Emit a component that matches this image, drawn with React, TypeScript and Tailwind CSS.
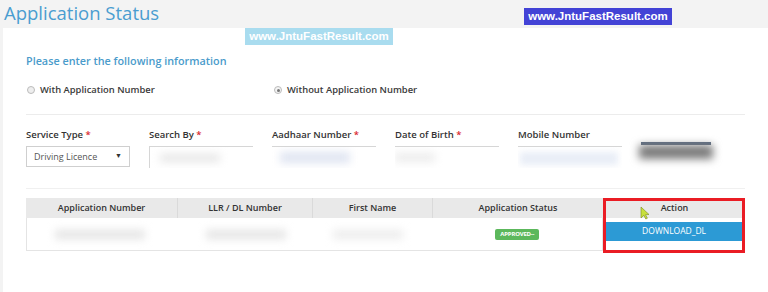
import React from 'react'

const fields = [
  { label: 'Service Type', req: true, kind: 'select' },
  { label: 'Search By', req: true, kind: 'box' },
  { label: 'Aadhaar Number', req: true, kind: 'blueTop' },
  { label: 'Date of Birth', req: true, kind: 'line' },
  { label: 'Mobile Number', req: false, kind: 'blueLine' },
]

const columns = [
  { title: 'Application Number', w: 'w-[151px]' },
  { title: 'LLR / DL Number', w: 'w-[135px]' },
  { title: 'First Name', w: 'w-[120px]' },
  { title: 'Application Status', w: 'w-[171px]' },
  { title: 'Action', w: 'w-[142px]' },
]

function Watermark({ light }: { light?: boolean }) {
  return (
    <div
      className={`w-[148px] h-[17px] flex items-center justify-center text-[11.5px] font-bold text-white ${
        light ? 'bg-[#a9dcef]' : 'bg-[#4343d6]'
      }`}
      style={{ fontFamily: '"Liberation Sans", Arial, sans-serif' }}
    >
      www.JntuFastResult.com
    </div>
  )
}

function Field({ label, req, kind }: { label: string; req: boolean; kind: string }) {
  return (
    <div className="w-[104px] flex flex-col">
      <div className="h-[16px] text-[9.5px] font-semibold text-[#333] leading-[16px] whitespace-nowrap">
        {label} {req && <span className="text-[#d9262c]">*</span>}
      </div>
      <div className="h-[3px]" />
      {kind === 'select' && (
        <div className="h-[21px] border border-[#cfcfcf] flex items-center justify-between px-[7px] text-[9px] text-[#555]">
          <span>Driving Licence</span>
          <span className="text-[7px] text-[#333]">▼</span>
        </div>
      )}
      {kind === 'box' && (
        <div className="h-[22px] border-l border-t border-[#d6d6d6] relative overflow-hidden">
          <div className="absolute left-[10px] top-[7px] w-[60px] h-[8px] bg-[#e6e6e6] blur-[4px]" />
        </div>
      )}
      {kind === 'blueTop' && (
        <div className="h-[22px] border-t border-[#d6d6d6] relative overflow-hidden">
          <div className="absolute left-[8px] top-[5px] w-[70px] h-[11px] bg-[#dfe4f1] blur-[4px]" />
        </div>
      )}
      {kind === 'line' && (
        <div className="h-[22px] border-t border-[#d6d6d6] relative overflow-hidden">
          <div className="absolute left-[0px] top-[6px] w-[40px] h-[9px] bg-[#ececec] blur-[4px]" />
        </div>
      )}
      {kind === 'blueLine' && (
        <div className="h-[22px] border-t border-[#d6d6d6] relative overflow-hidden">
          <div className="absolute left-[2px] top-[5px] w-[98px] h-[13px] bg-[#e9eef7] blur-[3px]" />
        </div>
      )}
    </div>
  )
}

export default function App() {
  return (
    <div
      className="w-[768px] h-[292px] bg-[#f3f3f3] overflow-hidden relative"
      style={{ fontFamily: '"Open Sans", "Noto Sans", sans-serif' }}
    >
      <div className="h-[28px] flex items-center pl-[4px] relative">
        <h1 className="text-[18.5px] leading-none text-[#4a9dd0] -mt-[2px]">Application Status</h1>
        <div className="absolute left-[524px] top-[8px]">
          <Watermark />
        </div>
      </div>

      <div className="ml-[3px] h-[264px] bg-white relative">
        <div className="absolute left-[242px] top-0">
          <Watermark light />
        </div>

        <div className="pl-[23px] pr-[23px] flex flex-col">
          <div className="mt-[26px] h-[14px] text-[10.8px] font-semibold text-[#4a9bcb] leading-[14px]">
            Please enter the following information
          </div>

          <div className="mt-[15px] h-[14px] flex items-center text-[9.4px] font-semibold text-[#3a3a3a]">
            <div className="w-[248px] flex items-center">
              <span className="ml-[1px] w-[8px] h-[8px] rounded-full border border-[#bbb] bg-[#eee]" />
              <span className="ml-[5px]">With Application Number</span>
            </div>
            <div className="flex items-center">
              <span className="w-[8px] h-[8px] rounded-full border border-[#bbb] bg-[#f4f4f4] flex items-center justify-center">
                <span className="w-[3px] h-[3px] rounded-full bg-[#777]" />
              </span>
              <span className="ml-[5px]">Without Application Number</span>
            </div>
          </div>

          <div className="mt-[17px] border-t border-[#ececec]" />

          <div className="mt-[12px] flex gap-[19px]">
            {fields.map(f => (
              <Field key={f.label} {...f} />
            ))}
            <div className="w-[70px] pt-[15px] relative">
              <div className="h-[3px] bg-[#5b6b82]" />
              <div className="absolute left-[-2px] top-[18px] w-[74px] h-[14px] bg-[#7a7a7a] blur-[4px]" />
            </div>
          </div>

          <div className="mt-[20px] border-t border-[#f0f0f0]" />

          <div className="mt-[9px] relative w-[719px]">
            <div className="flex h-[20px] bg-[#e9e9e9]">
              {columns.map((c, i) => (
                <div
                  key={c.title}
                  className={`${c.w} flex items-center justify-center text-[9px] font-semibold text-[#333] ${
                    i > 0 ? 'border-l border-[#dadada]' : ''
                  }`}
                >
                  {c.title}
                </div>
              ))}
            </div>
            <div className="flex h-[33px] border-l border-b border-[#e4e4e4]">
              <div className="w-[151px] relative">
                <div className="absolute left-[28px] top-[12px] w-[90px] h-[9px] bg-[#e4e4e4] blur-[4px]" />
              </div>
              <div className="w-[135px] relative">
                <div className="absolute left-[28px] top-[12px] w-[80px] h-[9px] bg-[#e4e4e4] blur-[4px]" />
              </div>
              <div className="w-[120px] relative">
                <div className="absolute left-[20px] top-[12px] w-[70px] h-[9px] bg-[#ececec] blur-[4px]" />
              </div>
              <div className="w-[171px] flex items-center justify-center border-r border-[#e4e4e4]">
                <span className="h-[11px] px-[5px] rounded-[2px] bg-[#5cb85c] text-white text-[6px] font-bold flex items-center tracking-[-0.2px]">
                  APPROVED--
                </span>
              </div>
              <div className="w-[142px] pt-[4px] px-[3px]">
                <div className="h-[19px] bg-[#2c9ad5] flex items-center justify-center text-[8.5px] text-white">
                  DOWNLOAD_DL
                </div>
              </div>
            </div>

            <div className="absolute left-[577px] top-0 w-[142px] h-[55px] border-[3px] border-[#ea1c24]" />

            <svg className="absolute left-[614px] top-[8px]" width="10" height="14" viewBox="0 0 10 14">
              <path d="M1 1 L1 12 L3.8 9.4 L5.8 13 L7.4 12.2 L5.5 8.7 L9 8.5 Z" fill="#c8e03c" stroke="#7a8a20" strokeWidth="0.6" />
            </svg>
          </div>
        </div>
      </div>
    </div>
  )
}
